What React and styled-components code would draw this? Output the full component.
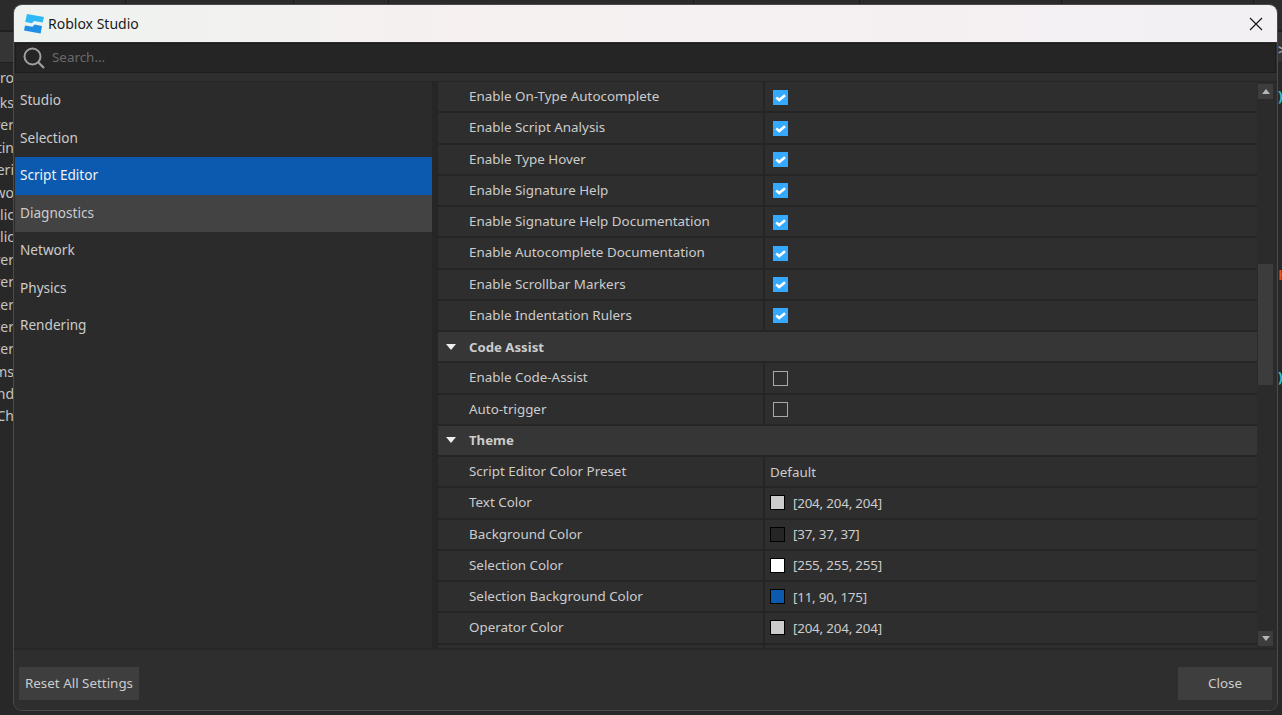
import styled, { createGlobalStyle } from "styled-components";

const GlobalStyle = createGlobalStyle`
  html, body {
    margin: 0;
    padding: 0;
    height: 100%;
    overflow: hidden;
    background: #252525;
  }
  #root {
    height: 100%;
  }
`;

const sideItems = ["Studio", "Selection", "Script Editor", "Diagnostics", "Network", "Physics", "Rendering"];
const behindLines = ["ro", "ks", "ver", "tin", "eri", "wo", "lic", "lic", "ver", "ver", "ter", "ter", "ter", "ms", "nd", "Ch"];
const topCells = [125, 167, 94, 304, 165, 201, 191];

const rows = [
  { label: "Enable On-Type Autocomplete", check: true },
  { label: "Enable Script Analysis", check: true },
  { label: "Enable Type Hover", check: true },
  { label: "Enable Signature Help", check: true },
  { label: "Enable Signature Help Documentation", check: true },
  { label: "Enable Autocomplete Documentation", check: true },
  { label: "Enable Scrollbar Markers", check: true },
  { label: "Enable Indentation Rulers", check: true },
  { section: "Code Assist" },
  { label: "Enable Code-Assist", check: false },
  { label: "Auto-trigger", check: false },
  { section: "Theme" },
  { label: "Script Editor Color Preset", value: "Default" },
  { label: "Text Color", color: "#cccccc", value: "[204, 204, 204]" },
  { label: "Background Color", color: "#252525", value: "[37, 37, 37]" },
  { label: "Selection Color", color: "#ffffff", value: "[255, 255, 255]" },
  { label: "Selection Background Color", color: "#0b5aaf", value: "[11, 90, 175]" },
  { label: "Operator Color", color: "#cccccc", value: "[204, 204, 204]" },
  { label: "", value: "" },
];

export default function App() {
  return (
    <Desktop>
      <GlobalStyle />
      <TopStrip>
        {topCells.map((w, i) => (
          <TopCell key={i} $w={w} />
        ))}
      </TopStrip>
      <ToolBand />
      <BehindList>
        {behindLines.map((t, i) => (
          <BehindLine key={i}>{t}</BehindLine>
        ))}
      </BehindList>
      <RightMarks>
        <Mark $top={43} $color="#a0a0a0">&gt;</Mark>
        <Mark $top={32} $color="#2fc4c4">)</Mark>
        <Mark $top={165} $color="#e8501a">H</Mark>
        <Mark $top={88} $color="#2fc4c4">)</Mark>
      </RightMarks>

      <Modal>
        <TitleBar>
          <Logo viewBox="0 0 20 20">
            <polygon points="3,0 20,3 18.6,8.5 10,7 8,9.2 1.2,8" fill="#2db9f5" />
            <polygon points="1,11.5 8.5,12.8 10.5,10.6 18,12 16.6,19.5 0,16.5" fill="#1f8fe6" />
          </Logo>
          <TitleText>Roblox Studio</TitleText>
          <CloseButton viewBox="0 0 14 14">
            <path d="M1 1 L13 13 M13 1 L1 13" stroke="#111" strokeWidth="1.1" fill="none" />
          </CloseButton>
        </TitleBar>

        <SearchBar>
          <SearchIcon viewBox="0 0 22 22">
            <circle cx="9.5" cy="9.5" r="8" stroke="#a0a0a0" strokeWidth="2" fill="none" />
            <path d="M15.5 15.5 L21 21" stroke="#a0a0a0" strokeWidth="2.2" fill="none" />
          </SearchIcon>
          <SearchHint>Search...</SearchHint>
        </SearchBar>

        <Body>
          <Sidebar>
            {sideItems.map((name) => (
              <SideItem key={name} $selected={name === "Script Editor"} $hover={name === "Diagnostics"}>
                {name}
              </SideItem>
            ))}
          </Sidebar>
          <Divider />
          <Tree>
            {rows.map((row, i) =>
              row.section ? (
                <SectionRow key={i}>
                  <Caret />
                  {row.section}
                </SectionRow>
              ) : (
                <Row key={i}>
                  <RowLabel>{row.label}</RowLabel>
                  <RowValue $tight={!!row.color}>
                    {row.check === true && (
                      <CheckBox $on>
                        <svg viewBox="0 0 15 15" width="15" height="15">
                          <path d="M3.2 7.6 L6.2 10 L12 5.2" stroke="#fff" strokeWidth="2.6" fill="none" />
                        </svg>
                      </CheckBox>
                    )}
                    {row.check === false && <CheckBox />}
                    {row.color && <Swatch $color={row.color} />}
                    {row.value}
                  </RowValue>
                </Row>
              )
            )}
          </Tree>
          <ScrollBar>
            <ScrollButton>
              <Arrow $up />
            </ScrollButton>
            <ScrollThumb />
            <ScrollButton>
              <Arrow />
            </ScrollButton>
          </ScrollBar>
        </Body>

        <Footer>
          <ResetButton>Reset All Settings</ResetButton>
          <CloseAction>Close</CloseAction>
        </Footer>
      </Modal>
    </Desktop>
  );
}

const Desktop = styled.div`
  position: relative;
  width: 1282px;
  height: 715px;
  overflow: hidden;
  background: #282828;
  font-family: "Noto Sans", sans-serif;
`;

const TopStrip = styled.div`
  height: 30px;
  display: flex;
  background: #2b2b2b;
  border-bottom: 2px solid #1f1f1f;
`;

const TopCell = styled.div`
  width: ${(p) => p.$w}px;
  flex: none;
  border-right: 1px solid #1c1c1c;
`;

const ToolBand = styled.div`
  height: 30px;
  background: #353535;
  border-bottom: 1px solid #1f1f1f;
`;

const BehindList = styled.div`
  width: 14px;
  padding-top: 4px;
  display: flex;
  flex-direction: column;
  align-items: flex-end;
  overflow: hidden;
`;

const BehindLine = styled.div`
  height: 22.4px;
  line-height: 22.4px;
  font-size: 14px;
  color: #c4c4c4;
  white-space: nowrap;

  &:first-child {
    margin-bottom: 2.6px;
  }
`;

const RightMarks = styled.div`
  position: absolute;
  top: 0;
  right: 0;
  width: 4px;
  display: flex;
  flex-direction: column;
`;

const Mark = styled.div`
  margin-top: ${(p) => p.$top}px;
  height: 14px;
  line-height: 14px;
  font-size: 14px;
  font-weight: 700;
  color: ${(p) => p.$color};
`;

const Modal = styled.div`
  position: absolute;
  left: 14px;
  top: 5px;
  width: 1263px;
  height: 705px;
  box-sizing: border-box;
  display: flex;
  flex-direction: column;
  background: #2e2e2e;
  border-radius: 8px;
  overflow: hidden;
  box-shadow: 0 0 0 1px #4a4a4a;
`;

const TitleBar = styled.div`
  height: 37px;
  flex: none;
  display: flex;
  align-items: center;
  padding: 0 12px 0 10px;
  background: linear-gradient(90deg, #eef3f0 0%, #f6f0f0 35%, #f3f0f4 100%);
`;

const Logo = styled.svg`
  width: 20px;
  height: 20px;
  flex: none;
`;

const TitleText = styled.div`
  margin-left: 4px;
  font-size: 14px;
  color: #1a1a1a;
  flex: 1;
`;

const CloseButton = styled.svg`
  width: 14px;
  height: 14px;
  margin-right: 2px;
`;

const SearchBar = styled.div`
  height: 30px;
  flex: none;
  margin: 1px 1px 0;
  box-sizing: border-box;
  display: flex;
  align-items: center;
  padding-left: 7px;
  background: #252525;
  border: 1px solid #1c1c1c;
`;

const SearchIcon = styled.svg`
  width: 22px;
  height: 22px;
`;

const SearchHint = styled.div`
  margin: 0 0 2px 7px;
  font-size: 13.4px;
  color: #6a6a6a;
`;

const Body = styled.div`
  margin-top: 8px;
  height: 569px;
  flex: none;
  display: flex;
  background: #2b2b2b;
  border-top: 1px solid #262626;
  border-bottom: 2px solid #262626;
  box-sizing: border-box;
  padding-left: 1px;
`;

const Sidebar = styled.div`
  width: 417px;
  flex: none;
  background: #2b2b2b;
`;

const SideItem = styled.div`
  height: 37.5px;
  line-height: 36px;
  padding-left: 5px;
  font-size: 13.6px;
  color: ${(p) => (p.$selected ? "#f2f2f2" : "#cccccc")};
  background: ${(p) => (p.$selected ? "#0b5aaf" : p.$hover ? "#434343" : "transparent")};
`;

const Divider = styled.div`
  width: 6px;
  flex: none;
  background: #262626;
`;

const Tree = styled.div`
  width: 819px;
  flex: none;
  overflow: hidden;
  background: #2e2e2e;
`;

const Row = styled.div`
  height: 31.25px;
  box-sizing: border-box;
  display: grid;
  grid-template-columns: 327px 1fr;
  border-bottom: 2px solid #252525;
`;

const SectionRow = styled.div`
  height: 31.25px;
  box-sizing: border-box;
  display: flex;
  align-items: center;
  padding-left: 8px;
  border-bottom: 2px solid #252525;
  background: #363636;
  font-size: 13.2px;
  font-weight: 700;
  color: #cccccc;
`;

const Caret = styled.span`
  width: 0;
  height: 0;
  margin-right: 13px;
  border-left: 5px solid transparent;
  border-right: 5px solid transparent;
  border-top: 6px solid #eeeeee;
`;

const RowLabel = styled.div`
  display: flex;
  align-items: center;
  padding: 0 0 1px 31px;
  font-size: 13.4px;
  color: #cccccc;
  border-right: 2px solid #252525;
`;

const RowValue = styled.div`
  display: flex;
  align-items: center;
  padding-left: 5px;
  font-size: 13.4px;
  letter-spacing: ${(p) => (p.$tight ? "-0.2px" : "normal")};
  color: #cccccc;
`;

const CheckBox = styled.span`
  width: 15px;
  height: 15px;
  margin: 1px 0 0 3px;
  box-sizing: border-box;
  display: flex;
  background: ${(p) => (p.$on ? "#35a9ff" : "transparent")};
  border: ${(p) => (p.$on ? "none" : "1px solid #a8a8a8")};

  svg {
    display: block;
  }
`;

const Swatch = styled.span`
  width: 15px;
  height: 15px;
  margin-right: 8px;
  box-sizing: border-box;
  background: ${(p) => p.$color};
  border: 1px solid #000000;
`;

const ScrollBar = styled.div`
  width: 15px;
  margin-left: 1px;
  flex: none;
  display: flex;
  flex-direction: column;
  padding-top: 2px;
  background: #2b2b2b;
`;

const ScrollButton = styled.div`
  height: 15px;
  flex: none;
  display: flex;
  align-items: center;
  justify-content: center;
  background: #3d3d3d;
`;

const Arrow = styled.span`
  width: 0;
  height: 0;
  border-left: 4.5px solid transparent;
  border-right: 4.5px solid transparent;
  ${(p) => (p.$up ? "border-bottom: 5px solid #b5b5b5;" : "border-top: 5px solid #b5b5b5;")}
`;

const ScrollThumb = styled.div`
  height: 121px;
  margin: 165px 0 246px;
  flex: none;
  background: #3c3c3c;
`;

const Footer = styled.div`
  flex: 1;
  display: flex;
  align-items: flex-start;
  justify-content: space-between;
  padding: 17px 5px 0 5px;
  background: #2e2e2e;
`;

const ResetButton = styled.div`
  width: 120px;
  height: 33px;
  line-height: 32px;
  text-align: center;
  font-size: 13.4px;
  color: #cccccc;
  background: #3e3e3e;
`;

const CloseAction = styled(ResetButton)`
  width: 94px;
`;
